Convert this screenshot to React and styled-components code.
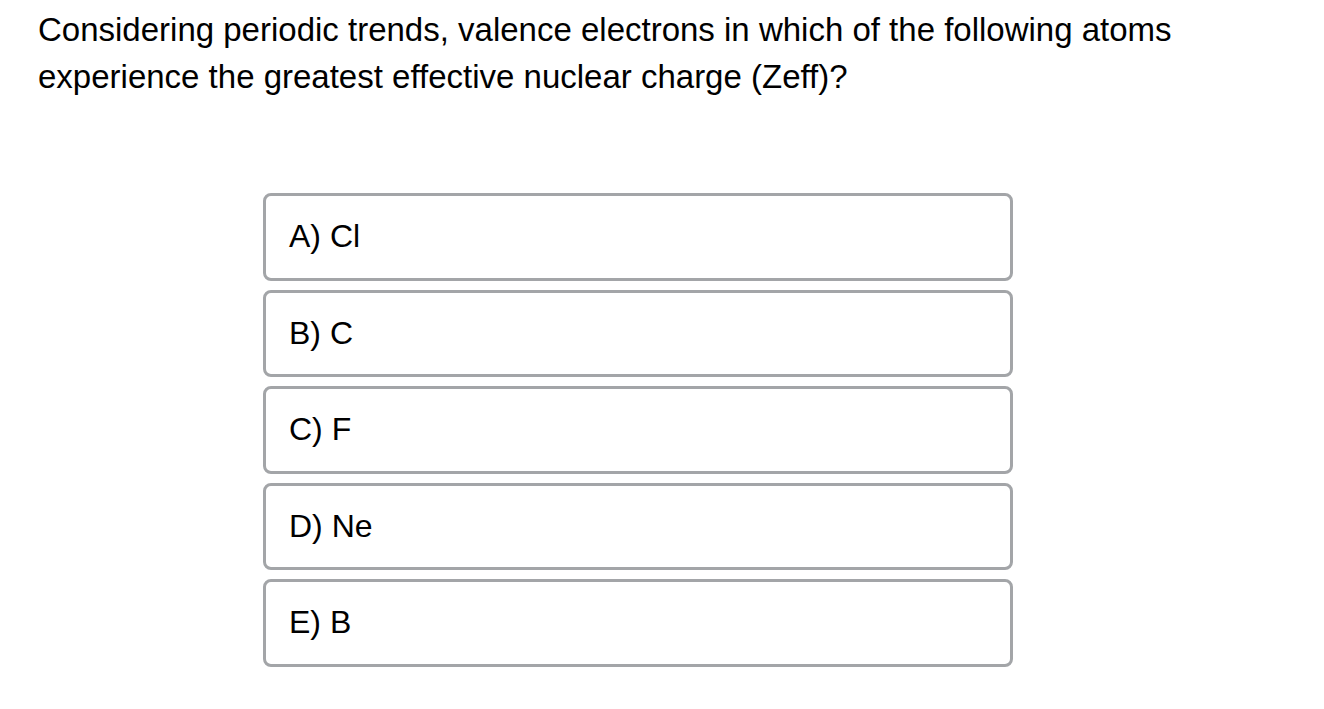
import React from "react";
import styled, { createGlobalStyle } from "styled-components";

const Global = createGlobalStyle`
  html, body { margin: 0; padding: 0; background: #fff; }
  body { font-family: "Liberation Sans", Arial, sans-serif; color: #000; }
`;

const Page = styled.div`
  padding: 6px 38px 0 38px;
  display: flex;
  flex-direction: column;
`;

const Question = styled.p`
  margin: 0;
  font-size: 33px;
  line-height: 47px;
`;

const Options = styled.div`
  margin-top: 93px;
  margin-left: 225px;
  width: 750px;
  display: flex;
  flex-direction: column;
  gap: 9px;
`;

const Option = styled.div`
  box-sizing: border-box;
  height: 87.5px;
  border: 3px solid #a3a5a8;
  border-radius: 8px;
  display: flex;
  align-items: center;
  padding-left: 23px;
  font-size: 32px;
`;

const options = ["A) Cl", "B) C", "C) F", "D) Ne", "E) B"];

export default function App() {
  return (
    <>
      <Global />
      <Page>
        <Question>
          Considering periodic trends, valence electrons in which of the following atoms
          <br />
          experience the greatest effective nuclear charge (Zeff)?
        </Question>
        <Options>
          {options.map((o) => (
            <Option key={o}>{o}</Option>
          ))}
        </Options>
      </Page>
    </>
  );
}
